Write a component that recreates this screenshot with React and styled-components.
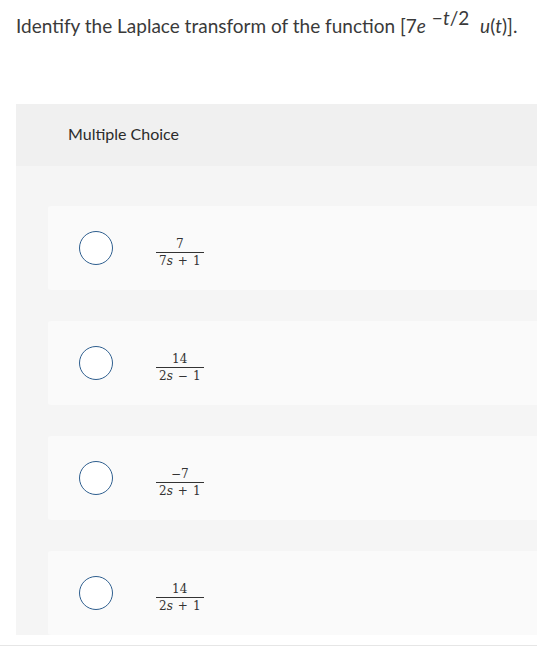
import styled, { createGlobalStyle } from 'styled-components';

const GlobalStyle = createGlobalStyle`
  html, body {
    margin: 0;
    padding: 0;
    background: #ffffff;
  }
  body {
    font-family: Lato, "Open Sans", sans-serif;
    color: #333333;
    overflow: hidden;
  }
`;

const options = [
  { num: '7', den: ['7s', '+', '1'] },
  { num: '14', den: ['2s', '−', '1'] },
  { num: '−7', den: ['2s', '+', '1'] },
  { num: '14', den: ['2s', '+', '1'] },
];

const Term = ({ value }) => {
  // split digits from the variable so "s" can be italic
  const m = value.match(/^(\d*)(s?)$/);
  if (!m) return <span>{value}</span>;
  return (
    <span>
      {m[1]}
      {m[2] && <Var>{m[2]}</Var>}
    </span>
  );
};

const App = () => {
  return (
    <Page>
      <GlobalStyle />
      <Question>
        Identify the Laplace transform of the function [7<Ital>e</Ital>
        <Sup>−<Ital>t</Ital>/2</Sup> <Ital>u</Ital>(<Ital>t</Ital>)].
      </Question>
      <Panel>
        <PanelHeader>Multiple Choice</PanelHeader>
        <PanelBody>
          {options.map((opt, i) => (
            <Option key={i}>
              <Radio />
              <Fraction>
                <Num>{opt.num}</Num>
                <Den>
                  <Term value={opt.den[0]} />
                  <Op>{opt.den[1]}</Op>
                  <span>{opt.den[2]}</span>
                </Den>
              </Fraction>
            </Option>
          ))}
        </PanelBody>
      </Panel>
      <Rule />
    </Page>
  );
};

const Page = styled.div`
  width: 537px;
  height: 656px;
  overflow: hidden;
`;

const Question = styled.p`
  margin: 0;
  padding: 12px 0 0 16px;
  font-size: 19px;
  line-height: 28px;
  color: #3a3a3a;
  white-space: nowrap;
`;

const Ital = styled.i`
  font-style: italic;
`;

const Sup = styled.sup`
  font-size: 19px;
  vertical-align: 8px;
  line-height: 0;
  margin-left: 6px;
  margin-right: 6px;
`;

const Panel = styled.section`
  margin: 64px 0 0 16px;
  width: 560px;
  background: #f5f5f5;
`;

const PanelHeader = styled.div`
  height: 62px;
  display: flex;
  align-items: center;
  padding-left: 52px;
  padding-bottom: 3px;
  box-sizing: border-box;
  background: #f0f0f0;
  font-size: 16px;
  color: #2b2b2b;
`;

const PanelBody = styled.div`
  padding: 40px 0 0 32px;
  display: flex;
  flex-direction: column;
  gap: 31px;
`;

const Option = styled.div`
  height: 84px;
  background: #fafafa;
  border-radius: 3px 0 0 3px;
  display: flex;
  align-items: center;
  padding-left: 31px;
`;

const Radio = styled.span`
  width: 34px;
  height: 34px;
  box-sizing: border-box;
  border: 1.5px solid #2f5f8f;
  border-radius: 50%;
  background: #ffffff;
  flex-shrink: 0;
`;

const Fraction = styled.span`
  margin-left: 43px;
  margin-top: 8px;
  display: inline-flex;
  flex-direction: column;
  align-items: center;
  font-family: "DejaVu Serif", "Liberation Serif", serif;
  font-size: 12px;
  color: #333333;
  line-height: 14px;
`;

const Num = styled.span`
  padding: 0 3px 1px;
`;

const Den = styled.span`
  border-top: 1px solid #333333;
  padding: 1px 3px 0;
  display: flex;
  gap: 5px;
`;

const Var = styled.i`
  font-style: italic;
`;

const Op = styled.span``;

const Rule = styled.div`
  margin-top: 10px;
  height: 1px;
  background: #e6e6e6;
`;

export default App;
